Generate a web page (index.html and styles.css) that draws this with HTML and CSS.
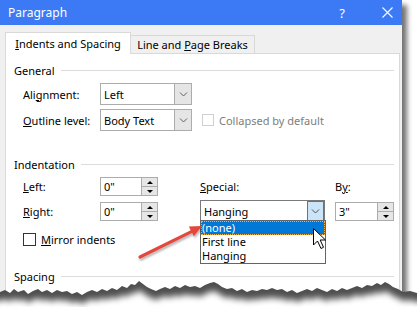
FILE: index.html
```html
<!DOCTYPE html>
<html lang="en">

<head>
    <meta charset="UTF-8">
    <meta name="viewport" content="width=device-width, initial-scale=1.0">
    <title>Paragraph</title>
    <link rel="stylesheet" href="styles.css">
</head>

<body>
    <div class="dialog">
        <div class="titlebar">
            <span class="title">Paragraph</span>
            <span class="help">?</span>
            <span class="close">
                <svg width="11" height="11" viewBox="0 0 11 11"><path d="M0.5 0.5L10.5 10.5M10.5 0.5L0.5 10.5" stroke="#fff" stroke-width="1.1"/></svg>
            </span>
        </div>

        <div class="tabs">
            <div class="tab active"><u>I</u>ndents and Spacing</div>
            <div class="tab">Line and <u>P</u>age Breaks</div>
        </div>

        <div class="panel">
            <div class="heading">General</div>
            <div class="row first">
                <label class="lbl">Ali<u>g</u>nment:</label>
                <div class="combo">
                    <span class="value">Left</span>
                    <span class="arrow"><svg width="9" height="5" viewBox="0 0 9 5"><polyline points="1,0.5 4.5,4 8,0.5" fill="none" stroke="#606060"/></svg></span>
                </div>
            </div>
            <div class="row">
                <label class="lbl"><u>O</u>utline level:</label>
                <div class="combo">
                    <span class="value">Body Text</span>
                    <span class="arrow"><svg width="9" height="5" viewBox="0 0 9 5"><polyline points="1,0.5 4.5,4 8,0.5" fill="none" stroke="#606060"/></svg></span>
                </div>
                <span class="check disabled"></span>
                <span class="check-text disabled-text">Collapsed by default</span>
            </div>

            <div class="heading section">Indentation</div>
            <div class="indent">
                <div class="col-left">
                    <div class="spin-row">
                        <label class="lbl"><u>L</u>eft:</label>
                        <div class="spin"><span class="value">0"</span><span class="btns"><span class="up"></span><span class="down"></span></span></div>
                    </div>
                    <div class="spin-row second">
                        <label class="lbl"><u>R</u>ight:</label>
                        <div class="spin"><span class="value">0"</span><span class="btns"><span class="up"></span><span class="down"></span></span></div>
                    </div>
                    <div class="mirror">
                        <span class="check"></span>
                        <span class="check-text"><u>M</u>irror indents</span>
                    </div>
                </div>
                <div class="col-special">
                    <div class="col-lbl"><u>S</u>pecial:</div>
                    <div class="combo open">
                        <span class="value">Hanging</span>
                        <span class="arrow"><svg width="9" height="5" viewBox="0 0 9 5"><polyline points="1,0.5 4.5,4 8,0.5" fill="none" stroke="#505050"/></svg></span>
                        <ul class="list">
                            <li class="selected">(none)</li>
                            <li>First line</li>
                            <li>Hanging</li>
                        </ul>
                    </div>
                </div>
                <div class="col-by">
                    <div class="col-lbl">B<u>y</u>:</div>
                    <div class="spin wide"><span class="value">3"</span><span class="btns"><span class="up"></span><span class="down"></span></span></div>
                </div>
            </div>

            <div class="heading section2">Spacing</div>
            <div class="indent spacing">
                <div class="col-left">
                    <div class="spin-row">
                        <label class="lbl"><u>B</u>efore:</label>
                        <div class="spin"><span class="value">0 pt</span><span class="btns"><span class="up"></span><span class="down"></span></span></div>
                    </div>
                </div>
                <div class="col-special">
                    <div class="col-lbl">Li<u>n</u>e spacing:</div>
                </div>
                <div class="col-by">
                    <div class="col-lbl"><u>A</u>t:</div>
                </div>
            </div>
        </div>
    </div>

    <!-- annotation layer: callout arrow, mouse pointer, torn edge -->
    <svg class="overlay" width="417" height="325" viewBox="0 0 417 325">
        <defs>
            <filter id="soft" x="-20%" y="-20%" width="140%" height="140%">
                <feGaussianBlur stdDeviation="3"/>
            </filter>
            <filter id="drop" x="-20%" y="-20%" width="140%" height="160%">
                <feDropShadow dx="1" dy="2" stdDeviation="1.2" flood-color="#000" flood-opacity="0.3"/>
            </filter>
        </defs>

        <g filter="url(#drop)">
            <line x1="140" y1="257" x2="192" y2="231.4" stroke="#e4473a" stroke-width="3.2" stroke-linecap="round"/>
            <polygon points="202,226 193.8,236.2 188.9,226.6" fill="#e4473a"/>
        </g>

        <path d="M313.5 228.5 L313.5 245 L317.5 241 L321 248.5 L323.5 247.3 L320.2 240 L325.5 240 Z" fill="#fff" stroke="#000" stroke-width="1" stroke-linejoin="round"/>

        <path d="M-20 292 L0 292 L5 290 L10 293 L14 289 L18 292 L24 290 L28 294 L33 291 L38 289 L42 292 L47 290 L52 293 L57 290 L62 292 L67 291 L72 294 L77 292 L82 295 L87 292 L92 290 L97 292 L102 289 L107 291 L112 288 L117 290 L122 286 L127 288 L131 284 L135 285 L139 281 L143 284 L147 287 L151 289 L156 291 L160 289 L165 287 L170 289 L175 286 L180 288 L185 285 L190 287 L195 286 L200 288 L205 285 L210 283 L214 282 L218 284 L222 287 L227 289 L232 288 L237 291 L242 289 L247 292 L252 290 L257 291 L262 289 L267 290 L272 288 L277 290 L282 289 L287 292 L292 290 L297 293 L302 291 L307 289 L312 291 L317 288 L322 290 L327 292 L332 289 L337 291 L342 288 L347 290 L352 288 L357 286 L362 288 L367 285 L372 286 L377 283 L381 285 L385 282 L389 284 L393 287 L398 289 L403 292 L410 291 L417 293 L440 293 L440 340 L-20 340 Z" fill="#4f4f4f"/>
        <path transform="translate(0 9)" filter="url(#soft)" d="M-20 292 L0 292 L5 290 L10 293 L14 289 L18 292 L24 290 L28 294 L33 291 L38 289 L42 292 L47 290 L52 293 L57 290 L62 292 L67 291 L72 294 L77 292 L82 295 L87 292 L92 290 L97 292 L102 289 L107 291 L112 288 L117 290 L122 286 L127 288 L131 284 L135 285 L139 281 L143 284 L147 287 L151 289 L156 291 L160 289 L165 287 L170 289 L175 286 L180 288 L185 285 L190 287 L195 286 L200 288 L205 285 L210 283 L214 282 L218 284 L222 287 L227 289 L232 288 L237 291 L242 289 L247 292 L252 290 L257 291 L262 289 L267 290 L272 288 L277 290 L282 289 L287 292 L292 290 L297 293 L302 291 L307 289 L312 291 L317 288 L322 290 L327 292 L332 289 L337 291 L342 288 L347 290 L352 288 L357 286 L362 288 L367 285 L372 286 L377 283 L381 285 L385 282 L389 284 L393 287 L398 289 L403 292 L410 291 L417 293 L440 293 L440 340 L-20 340 Z" fill="#fff"/>
        <rect x="0" y="307" width="417" height="18" fill="#fff"/>
    </svg>
</body>

</html>
```

FILE: styles.css
```css
* {
    margin: 0;
    padding: 0;
    box-sizing: border-box;
}

body {
    position: relative;
    width: 417px;
    height: 325px;
    overflow: hidden;
    background: #fff;
    font-family: "Noto Sans", "Open Sans", sans-serif;
    font-size: 11px;
    color: #000;
}

u {
    text-decoration: underline;
    text-underline-offset: 1px;
}

.dialog {
    width: 402px;
    height: 325px;
    background: #f0f0f0;
    box-shadow: 5px 5px 5px rgba(0, 0, 0, 0.55);
}

.titlebar {
    height: 25px;
    display: flex;
    align-items: center;
    padding-left: 8px;
    background: #3b79f5;
    color: #fff;
    font-size: 12px;
}

.title {
    flex: 1;
}

.help {
    width: 30px;
    margin-right: 15px;
    text-align: center;
    font-size: 13px;
}

.close {
    width: 30px;
    height: 25px;
    display: flex;
    align-items: center;
    justify-content: center;
}

.tabs {
    height: 28px;
    display: flex;
    align-items: flex-end;
    padding-left: 5px;
}

.tab {
    width: 124px;
    height: 18px;
    line-height: 17px;
    text-align: center;
    border: 1px solid #d9d9d9;
    border-left: 0;
    border-bottom: 0;
    white-space: nowrap;
}

.tab.active {
    position: relative;
    z-index: 1;
    width: 126px;
    height: 22px;
    line-height: 22px;
    margin-bottom: -1px;
    border-left: 1px solid #d9d9d9;
    background: #fff;
}

.panel {
    height: 280px;
    margin: 0 2px 0 5px;
    padding: 0 5px 0 8px;
    background: #fff;
    border: 1px solid #d9d9d9;
}

.heading {
    display: flex;
    align-items: center;
    gap: 6px;
    height: 16px;
    margin-top: 8px;
    white-space: nowrap;
}

.heading::after {
    content: '';
    flex: 1;
    height: 1px;
    background: #dcdcdc;
}

.heading.section {
    margin-top: 25px;
}

.heading.section2 {
    margin-top: 22px;
}

.row {
    display: flex;
    align-items: center;
    height: 22px;
    margin-top: 4px;
    padding-left: 9px;
}

.row.first {
    margin-top: 5px;
}

.lbl {
    width: 77px;
    white-space: nowrap;
}

.combo {
    position: relative;
    width: 92px;
    height: 22px;
    display: flex;
    align-items: center;
    border: 1px solid #acacac;
    background: #fff;
}

.combo .value {
    flex: 1;
    padding-left: 3px;
}

.combo .arrow {
    width: 17px;
    height: 100%;
    display: flex;
    align-items: center;
    justify-content: center;
    background: #e5e5e5;
    border-left: 1px solid #acacac;
}

.combo.open {
    width: 125px;
    margin-top: 4px;
    border-color: #7a7a7a;
}

.combo.open .arrow {
    border: 1px solid #3c7fb1;
    background: #cce4f7;
}

.list {
    position: absolute;
    left: -1px;
    top: calc(100% - 1px);
    width: 126px;
    height: 44px;
    list-style: none;
    background: #fff;
    border: 1px solid #646464;
    z-index: 2;
}

.list li {
    height: 14px;
    line-height: 14px;
    padding-left: 1px;
    white-space: nowrap;
}

.list li.selected {
    background: #0078d7;
    color: #fff;
    outline: 1px dotted #f3b04a;
    outline-offset: -1px;
}

.check {
    width: 13px;
    height: 13px;
    border: 1px solid #333;
    background: #fff;
}

.check.disabled {
    width: 12px;
    height: 12px;
    margin-left: 10px;
    border-color: #cfcfcf;
}

.check-text {
    margin-left: 5px;
    white-space: nowrap;
}

.disabled-text {
    color: #7d7d7d;
}

.indent {
    display: flex;
    margin-top: 5px;
    padding-left: 9px;
}

.col-left {
    width: 178px;
}

.col-special {
    position: relative;
    width: 125px;
    margin-right: 10px;
}

.col-by {
    width: 59px;
}

.col-lbl {
    height: 19px;
    line-height: 19px;
    white-space: nowrap;
}

.spin-row {
    display: flex;
    align-items: center;
    height: 19px;
}

.spin-row.second {
    margin-top: 6px;
}

.spin {
    width: 58px;
    height: 19px;
    display: flex;
    border: 1px solid #acacac;
    background: #fff;
}

.col-by .spin {
    width: 59px;
    margin-top: 6px;
}

.spin .value {
    flex: 1;
    padding-left: 3px;
    line-height: 17px;
}

.spin .btns {
    width: 16px;
    display: flex;
    flex-direction: column;
    border-left: 1px solid #acacac;
}

.spin .btns span {
    flex: 1;
    display: flex;
    align-items: center;
    justify-content: center;
    background: #e6e6e6;
}

.spin .btns .up {
    border-bottom: 1px solid #acacac;
}

.spin .btns .up::before {
    content: '';
    border-left: 3px solid transparent;
    border-right: 3px solid transparent;
    border-bottom: 3px solid #000;
}

.spin .btns .down::before {
    content: '';
    border-left: 3px solid transparent;
    border-right: 3px solid transparent;
    border-top: 3px solid #000;
}

.mirror {
    display: flex;
    align-items: center;
    height: 13px;
    margin-top: 12px;
}

.spacing {
    margin-top: 8px;
}

.overlay {
    position: absolute;
    left: 0;
    top: 0;
    z-index: 5;
    pointer-events: none;
}
```
